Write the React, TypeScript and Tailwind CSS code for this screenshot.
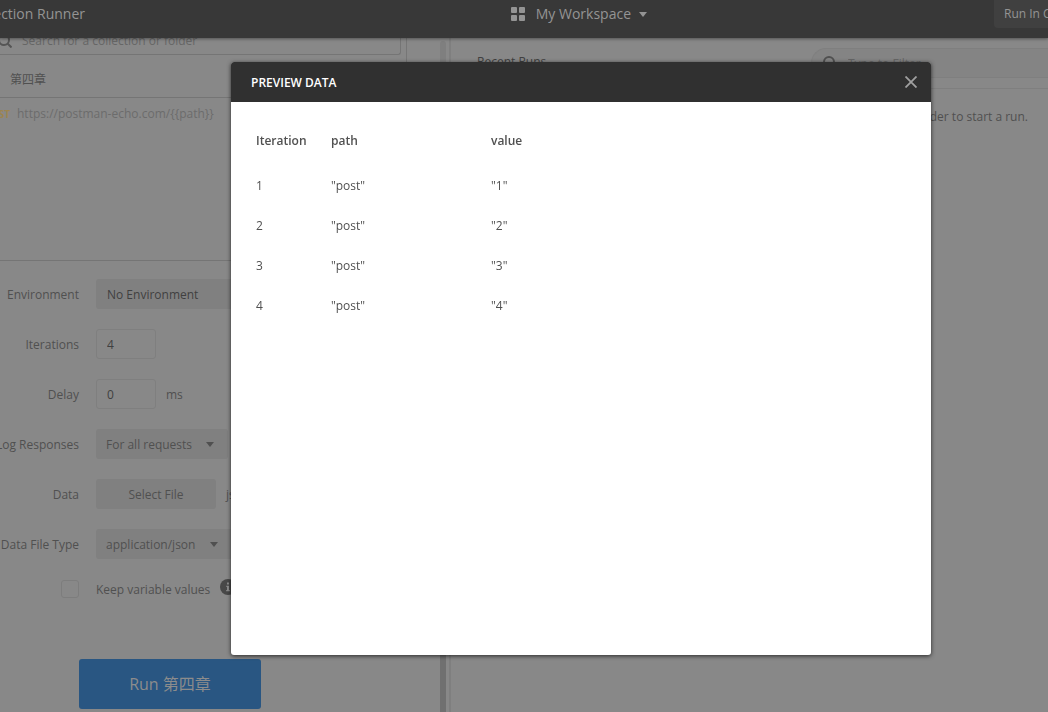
import type { ReactNode } from "react";

const rows = [
  { iteration: 1, path: '"post"', value: '"1"' },
  { iteration: 2, path: '"post"', value: '"2"' },
  { iteration: 3, path: '"post"', value: '"3"' },
  { iteration: 4, path: '"post"', value: '"4"' },
];

function Caret({ className }: { className: string }) {
  return (
    <svg viewBox="0 0 8 5" width="8" height="5" aria-hidden="true" className={className}>
      <path d="M0 0h8L4 5z" fill="currentColor" />
    </svg>
  );
}

function SearchIcon() {
  return (
    <svg viewBox="0 0 14 14" width="14" height="14" fill="none" stroke="currentColor" strokeWidth="2" aria-hidden="true" className="shrink-0">
      <circle cx="6" cy="6" r="5" />
      <path d="M9.5 9.5l4 4" />
    </svg>
  );
}

function Field({ label, id, children }: { label: string; id: string; children: ReactNode }) {
  return (
    <div className="flex h-[30px] items-center">
      <label htmlFor={id} className="mr-[17px] flex w-[79px] shrink-0 justify-end pt-0.5 whitespace-nowrap">
        {label}
      </label>
      {children}
    </div>
  );
}

function TopBar() {
  return (
    <header className="z-10 flex h-[38px] shrink-0 items-start bg-[#383838] text-sm text-[#949494] shadow-[0_1px_3px_rgba(0,0,0,0.4)]">
      <div className="flex h-7 min-w-0 flex-1 items-center">
        <h1 className="flex w-[85px] justify-end whitespace-nowrap">Collection Runner</h1>
      </div>
      <button type="button" className="flex h-7 items-center">
        <svg viewBox="0 0 14 14" width="14" height="14" fill="currentColor" aria-hidden="true" className="mr-[11px]">
          <rect width="6" height="6" rx="1" />
          <rect x="8" width="6" height="6" rx="1" />
          <rect y="8" width="6" height="6" rx="1" />
          <rect x="8" y="8" width="6" height="6" rx="1" />
        </svg>
        My Workspace
        <Caret className="ml-2" />
      </button>
      <div className="flex w-[401px] justify-end">
        <div className="w-[54px] overflow-hidden">
          <button type="button" className="h-7 rounded-bl bg-[#404040] px-2.5 text-xs whitespace-nowrap">
            Run In Command Line
          </button>
        </div>
      </div>
    </header>
  );
}

function RunnerPane() {
  return (
    <section className="flex w-[440px] shrink-0 flex-col">
      <div className="mr-[33px] border-r border-[#767676]">
        <div className="mr-[5px] flex h-[17px] items-end overflow-hidden rounded-br-[3px] border-r border-b border-[#757575]">
          <div className="flex h-[26px] shrink-0 items-center text-[#555]">
            <div className="flex w-[12px] justify-end">
              <SearchIcon />
            </div>
            <input
              aria-label="Search for a collection or folder"
              placeholder="Search for a collection or folder"
              className="ml-2.5 w-[300px] bg-transparent outline-none placeholder:text-[#666]"
            />
          </div>
        </div>
        <div className="flex h-[43px] items-center border-b border-[#757575] px-2.5 pt-2 text-[#505050]">第四章</div>
        <div className="flex h-[163px] items-start border-b border-[#757575] pt-[7px]">
          <span className="mr-[7px] flex w-2.5 shrink-0 justify-end text-[10px] leading-[18px] font-bold text-[#9c8450]">POST</span>
          <span className="leading-[18px] text-[#6c6c6c]">{"https://postman-echo.com/{{path}}"}</span>
        </div>
      </div>

      <form className="flex flex-col gap-5 pt-[18px]" onSubmit={(e) => e.preventDefault()}>
        <Field label="Environment" id="environment">
          <select id="environment" className="h-[30px] w-[240px] appearance-none rounded-[3px] bg-[#808080] px-[11px] pt-0.5 text-[#404040]">
            <option>No Environment</option>
          </select>
        </Field>
        <Field label="Iterations" id="iterations">
          <input id="iterations" defaultValue="4" className="h-[30px] w-[60px] rounded-[3px] border border-[#7f7f7f] bg-transparent px-2.5 text-[#404040]" />
        </Field>
        <Field label="Delay" id="delay">
          <input id="delay" defaultValue="0" className="h-[30px] w-[60px] rounded-[3px] border border-[#7f7f7f] bg-transparent px-2.5 text-[#404040]" />
          <span className="ml-2.5 pt-0.5">ms</span>
        </Field>
        <Field label="Log Responses" id="log">
          <div className="relative">
            <select id="log" className="h-[30px] w-[132px] appearance-none rounded-[3px] bg-[#808080] px-2.5 pt-0.5">
              <option>For all requests</option>
            </select>
            <Caret className="pointer-events-none absolute top-[13px] right-3.5 text-[#505050]" />
          </div>
        </Field>
        <Field label="Data" id="data">
          <button id="data" type="button" className="h-[30px] w-[120px] rounded-[3px] bg-[#808080] pt-0.5">
            Select File
          </button>
          <span className="ml-2.5 pt-0.5">json.json</span>
        </Field>
        <Field label="Data File Type" id="type">
          <div className="relative">
            <select id="type" className="h-[30px] w-[136px] appearance-none rounded-[3px] bg-[#808080] px-2.5 pt-0.5">
              <option>application/json</option>
            </select>
            <Caret className="pointer-events-none absolute top-[13px] right-3.5 text-[#505050]" />
          </div>
        </Field>
        <div className="-mt-[5px] flex h-[30px] items-center">
          <input id="keep" type="checkbox" className="mr-[17px] ml-[61px] size-[18px] appearance-none rounded-[3px] border border-[#7d7d7d]" />
          <label htmlFor="keep" className="pt-0.5">Keep variable values</label>
          <svg viewBox="0 0 16 16" width="16" height="16" aria-hidden="true" className="mb-1 ml-2.5">
            <circle cx="8" cy="8" r="8" fill="#484848" />
            <path d="M7 3.5h2v2H7zM6.3 6.8H9V11h.8v1.2H6.2V11H7V8H6.3z" fill="#8c8c8c" />
          </svg>
        </div>
        <button type="submit" className="mt-[35px] ml-[79px] h-[50px] w-[182px] rounded-[3px] bg-[#295682] text-base text-[#8c8c8c]">
          Run 第四章
        </button>
      </form>
    </section>
  );
}

function RecentRuns() {
  return (
    <section className="min-w-0 flex-1 border-l-2 border-[#7f7f7f]">
      <div className="flex h-[51px] items-start justify-between border-b border-[#7f7f7f] pt-2.5 pl-[26px]">
        <h2 className="pt-[5px] leading-[18px] text-[#404040]">Recent Runs</h2>
        <div className="flex h-[30px] w-[237px] items-center rounded-l-full border border-r-0 border-[#7f7f7f] bg-[#848484] pl-[11px] text-[#505050]">
          <SearchIcon />
          <input aria-label="Type to Filter" placeholder="Type to Filter" className="ml-[11px] w-[180px] bg-transparent pt-0.5 outline-none placeholder:text-[#666]" />
        </div>
      </div>
      <p className="pt-[19px] pr-5 text-right leading-[18px] text-[#505050]">Select a collection or folder to start a run.</p>
    </section>
  );
}

function PreviewDialog() {
  return (
    <div className="fixed inset-0 z-20 flex items-start justify-center pt-[62px] pl-[114px]">
      <div role="dialog" aria-labelledby="preview-title" className="flex w-[700px] flex-col overflow-hidden rounded-[3px] bg-white pb-[329px] shadow-[0_1px_4px_rgba(0,0,0,0.7)]">
        <div className="flex h-10 items-center justify-between bg-[#303030] pr-3.5 pl-5">
          <h2 id="preview-title" className="pt-0.5 text-xs font-semibold text-white">PREVIEW DATA</h2>
          <button type="button" aria-label="Close" className="text-[#a0a0a0]">
            <svg viewBox="0 0 12 12" width="12" height="12" fill="none" stroke="currentColor" strokeWidth="1.8" aria-hidden="true">
              <path d="M.5.5l11 11M11.5.5l-11 11" />
            </svg>
          </button>
        </div>
        <table className="mt-[14px] ml-[25px] table-fixed border-collapse text-left text-[#505050]">
          <thead>
            <tr className="h-[50px]">
              <th className="w-[75px] font-semibold">Iteration</th>
              <th className="w-40 font-semibold">path</th>
              <th className="font-semibold">value</th>
            </tr>
          </thead>
          <tbody>
            {rows.map((r) => (
              <tr key={r.iteration} className="h-10">
                <td>{r.iteration}</td>
                <td>{r.path}</td>
                <td>{r.value}</td>
              </tr>
            ))}
          </tbody>
        </table>
      </div>
    </div>
  );
}

export default function App() {
  return (
    <div className="flex h-screen flex-col overflow-hidden bg-[#888] font-['Open_Sans','Noto_Sans_CJK_SC',sans-serif] text-xs text-[#505050]">
      <TopBar />
      <main className="flex min-h-0 flex-1">
        <RunnerPane />
        <div className="mr-[3px] w-1.5 shrink-0 pt-[3px]">
          <div className="h-[380px] rounded-t-full bg-[#7f7f7f]" />
          <div className="h-[300px] bg-[#707070]" />
        </div>
        <RecentRuns />
      </main>
      <PreviewDialog />
    </div>
  );
}
